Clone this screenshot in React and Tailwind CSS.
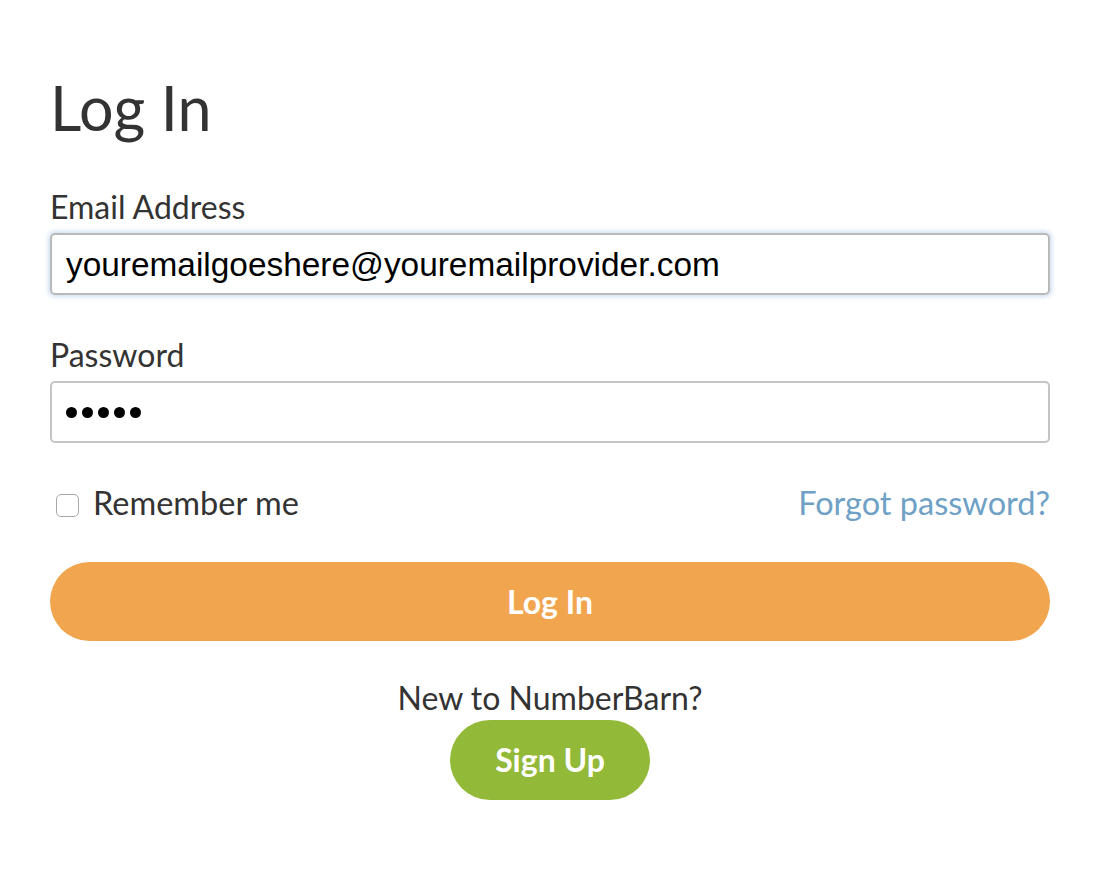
export default function App() {
  const sans = { fontFamily: 'Lato, "Open Sans", sans-serif' };
  return (
    <div className="min-h-[886px] w-[1120px] bg-white text-[#333333]" style={sans}>
      <div className="w-[1000px] ml-[50px] pt-[72px] flex flex-col">
        <h1 className="text-[61px] leading-[72px] font-normal text-[#333333]">Log In</h1>
        <label className="mt-[43px] text-[32px] leading-[40px]">Email Address</label>
        <div className="mt-[6px] h-[62px] rounded-[5px] border-2 border-[#b9b9b9] shadow-[0_0_4px_2px_rgba(120,170,220,0.35)] flex items-center pl-[14px] pt-[3px]">
          <span className="text-[33.4px] text-black" style={{ fontFamily: '"Liberation Sans", Arial, sans-serif' }}>
            youremailgoeshere@youremailprovider.com
          </span>
        </div>
        <label className="mt-[40px] text-[32px] leading-[40px]">Password</label>
        <div className="mt-[6px] h-[62px] rounded-[5px] border-2 border-[#c4c4c4] flex items-center pl-[14px] gap-[5px]">
          {[0, 1, 2, 3, 4].map((i) => (
            <span key={i} className="w-[11px] h-[11px] rounded-full bg-black" />
          ))}
        </div>
        <div className="mt-[40px] flex items-center justify-between h-[40px]">
          <div className="flex items-center">
            <span className="ml-[6px] mt-[4px] w-[23px] h-[23px] rounded-[5px] border border-[#a8a8a8] bg-white" />
            <span className="ml-[14px] text-[32.5px]">Remember me</span>
          </div>
          <span className="text-[32.5px] text-[#6fa1c6]">Forgot password?</span>
        </div>
        <button className="mt-[39px] h-[79px] rounded-full bg-[#f2a54f] text-white font-bold text-[32px]">
          Log In
        </button>
        <div className="mt-[39px] text-center text-[32px] leading-[36px]">New to NumberBarn?</div>
        <div className="flex justify-center mt-[4px]">
          <button className="w-[200px] h-[80px] rounded-full bg-[#93b939] text-white font-bold text-[32px]">
            Sign Up
          </button>
        </div>
      </div>
    </div>
  );
}
